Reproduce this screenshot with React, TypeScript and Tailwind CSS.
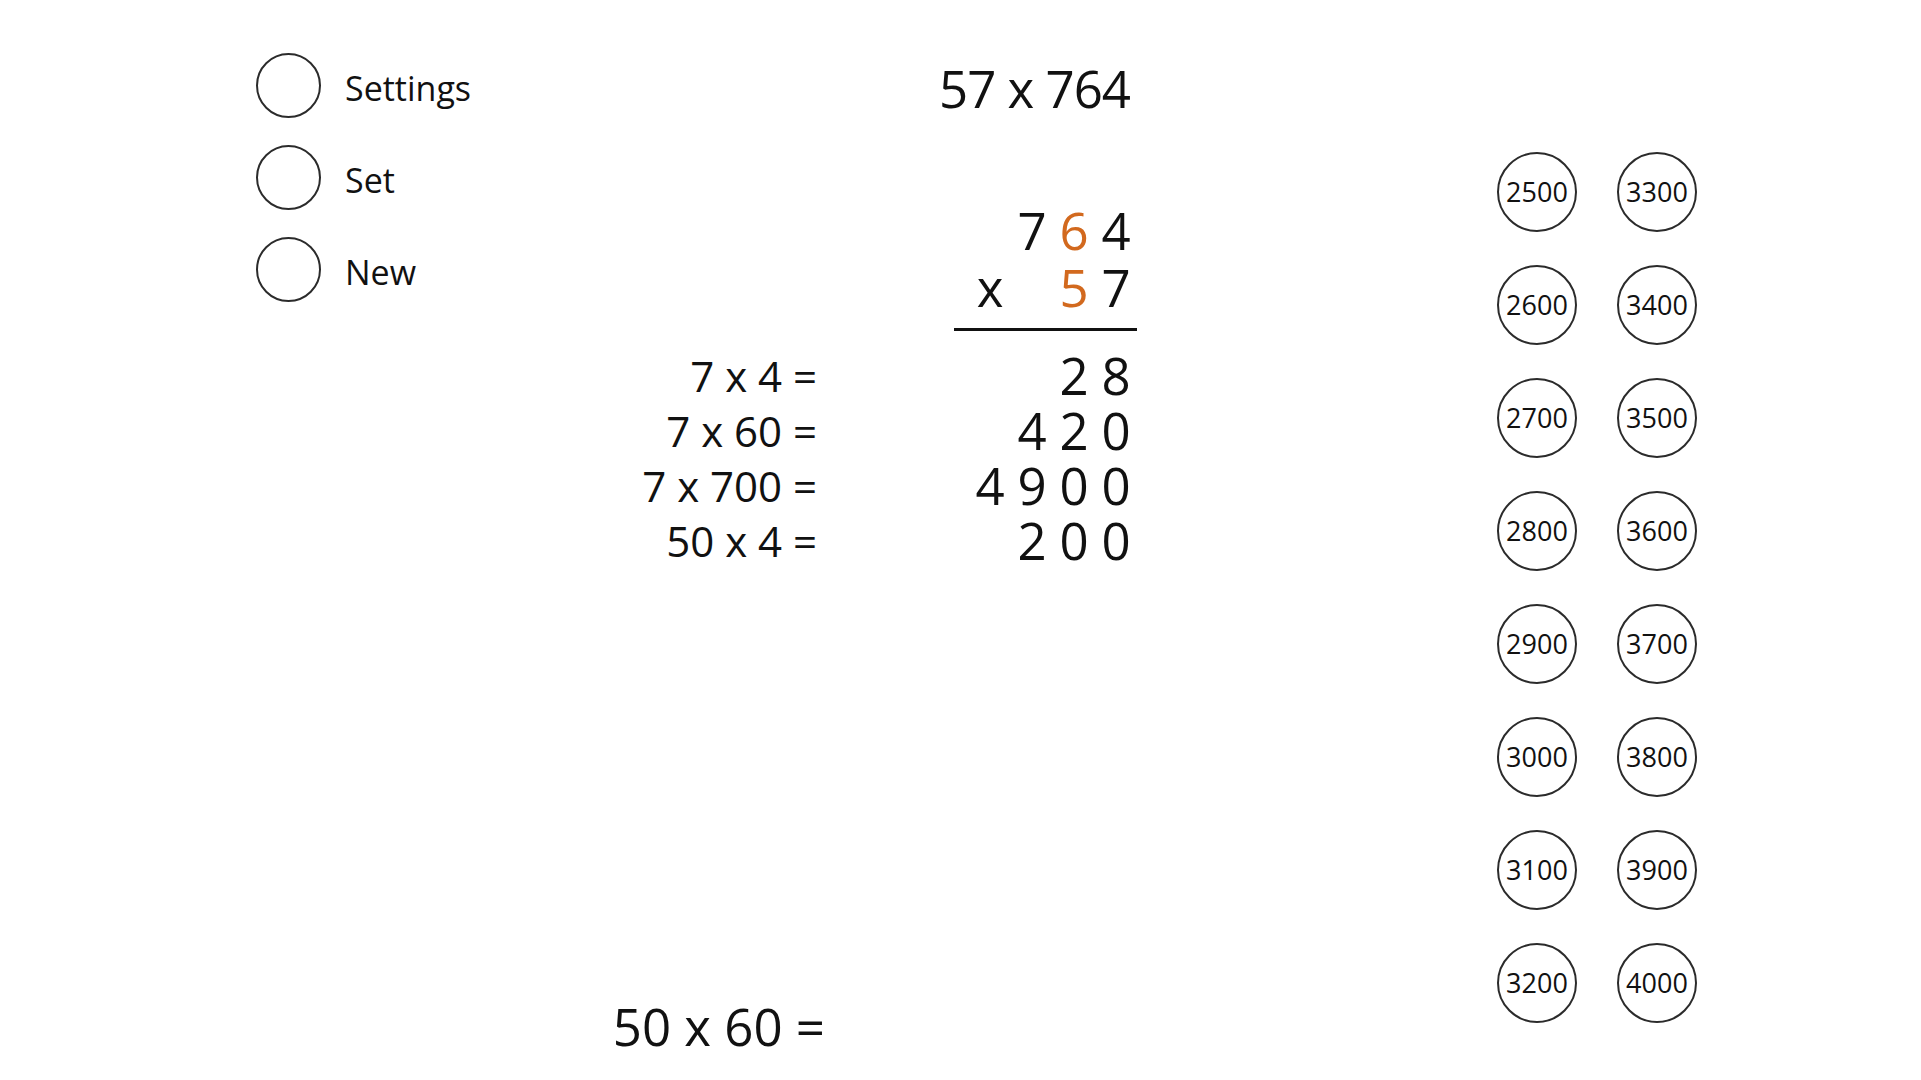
const menuItems = ["Settings", "Set", "New"];

const choices = [
  "2500", "2600", "2700", "2800", "2900", "3000", "3100", "3200",
  "3300", "3400", "3500", "3600", "3700", "3800", "3900", "4000",
];

// each cell is one digit column of the long multiplication
const topRows = [
  [
    { d: "", hot: false },
    { d: "7", hot: false },
    { d: "6", hot: true },
    { d: "4", hot: false },
  ],
  [
    { d: "x", hot: false },
    { d: "", hot: false },
    { d: "5", hot: true },
    { d: "7", hot: false },
  ],
];

const partials = [
  { eq: "7 x 4 =", digits: ["", "", "2", "8"] },
  { eq: "7 x 60 =", digits: ["", "4", "2", "0"] },
  { eq: "7 x 700 =", digits: ["4", "9", "0", "0"] },
  { eq: "50 x 4 =", digits: ["", "2", "0", "0"] },
];

const App = () => {
  return (
    <div className="flex h-[1080px] w-[1921px] overflow-hidden bg-white font-['Open_Sans',sans-serif] text-[#111]">
      {/* left menu */}
      <div className="flex w-[600px] shrink-0 flex-col gap-[27px] pl-[256px] pt-[53px]">
        {menuItems.map((item) => (
          <div key={item} className="flex h-[65px] items-start gap-[24px]">
            <div className="h-[65px] w-[65px] shrink-0 rounded-full border-[2.5px] border-[#2b2b2b]" />
            <span className="mt-[6px] text-[34px] leading-[59px]">{item}</span>
          </div>
        ))}
      </div>

      {/* worksheet */}
      <div className="flex h-full w-[537px] shrink-0 flex-col">
        <div className="mt-[58px] pr-[7px] text-right text-[51px] leading-[60px] tracking-[-1px]">57 x 764</div>

        <div className="mt-[84px] flex flex-col self-end">
          {topRows.map((row, i) => (
            <div key={i} className="grid w-[168px] grid-cols-4 text-center text-[51px] leading-[57px]">
              {row.map((c, j) => (
                <span key={j} className={c.hot ? "text-[#d2691e]" : ""}>
                  {c.d}
                </span>
              ))}
            </div>
          ))}
        </div>

        <div className="mt-[12px] h-[3px] w-[183px] self-end bg-[#111]" />

        <div className="mt-[17px] flex flex-col">
          {partials.map((p) => (
            <div key={p.eq} className="flex items-start">
              <span className="w-[217px] text-right text-[42px] leading-[55px]">{p.eq}</span>
              <div className="ml-auto grid w-[168px] grid-cols-4 text-center text-[51px] leading-[55px]">
                {p.digits.map((d, j) => (
                  <span key={j}>{d}</span>
                ))}
              </div>
            </div>
          ))}
        </div>

        <div className="mb-[24px] mt-auto w-[225px] text-right text-[51px] leading-[60px]">50 x 60 =</div>
      </div>

      {/* answer choices */}
      <div className="ml-[360px] pt-[152px]">
        <div className="grid grid-flow-col grid-rows-8 gap-x-[40px] gap-y-[33px]">
          {choices.map((c) => (
            <div
              key={c}
              className="flex h-[80px] w-[80px] items-center justify-center rounded-full border-[2.5px] border-[#2b2b2b] text-[27px]"
            >
              {c}
            </div>
          ))}
        </div>
      </div>
    </div>
  );
};

export default App;
